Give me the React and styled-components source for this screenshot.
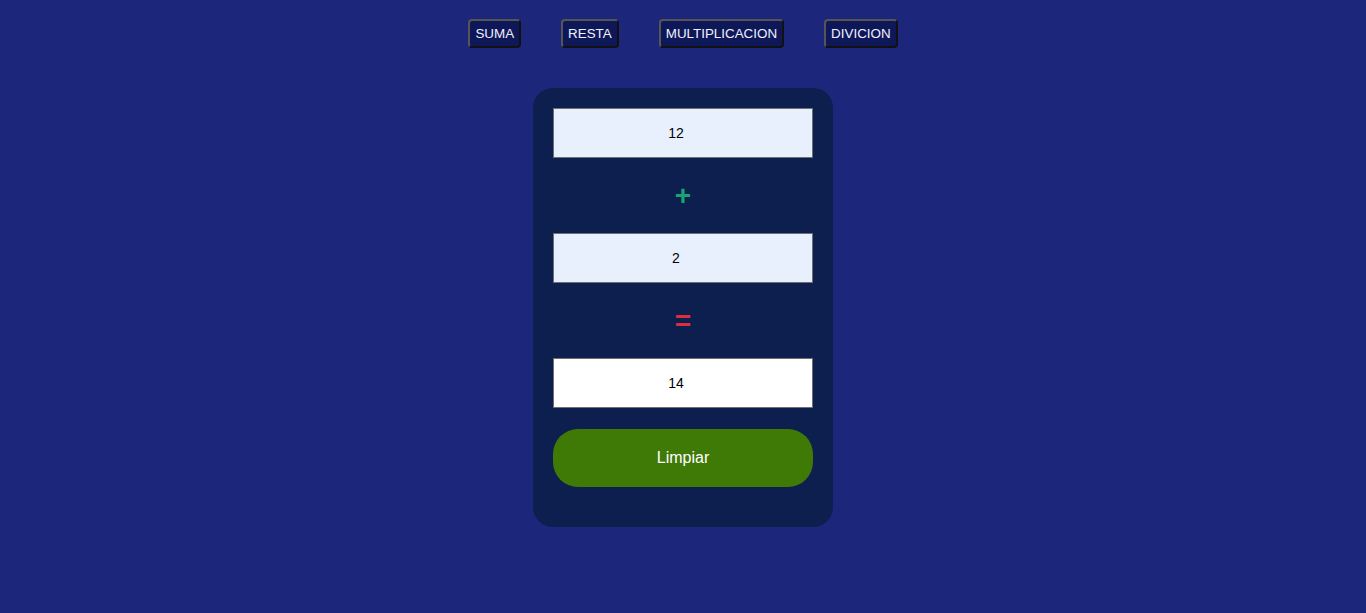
import styled, { createGlobalStyle } from "styled-components";

const Global = createGlobalStyle`
  body {
    margin: 0;
    background: #1c267a;
    font-family: "Liberation Sans", Arial, sans-serif;
  }
`;

const Page = styled.div`
  min-height: 613px;
  display: flex;
  flex-direction: column;
  align-items: center;
  padding-top: 19px;
  box-sizing: border-box;
`;

const Nav = styled.nav`
  display: flex;
  gap: 40px;
`;

const NavButton = styled.button`
  height: 29px;
  padding: 0 5px;
  background: #0e1858;
  color: #f0f0ff;
  font-family: "Liberation Sans", Arial, sans-serif;
  font-size: 13.4px;
  border: 2px solid #555;
  border-right-color: #111;
  border-bottom-color: #111;
  border-radius: 4px;
  cursor: pointer;
`;

const Card = styled.div`
  margin-top: 40px;
  width: 300px;
  box-sizing: border-box;
  padding: 20px 20px 40px;
  background: #0d1f4f;
  border-radius: 20px;
  display: flex;
  flex-direction: column;
`;

const Field = styled.input`
  width: 260px;
  height: 50px;
  box-sizing: border-box;
  border: 1px solid #6f6f6f;
  padding: 0 14px 0 0;
  background: ${(p) => (p.$result ? "#ffffff" : "#e8f0fe")};
  text-align: center;
  font-family: "Liberation Sans", Arial, sans-serif;
  font-size: 14px;
  color: #000;
  outline: none;
`;

const Operator = styled.div`
  height: 75px;
  display: flex;
  align-items: center;
  justify-content: center;
  font-size: 28px;
  font-weight: bold;
  color: ${(p) => p.$color};
  font-family: "Liberation Sans", Arial, sans-serif;
`;

const ClearButton = styled.button`
  margin-top: 21px;
  height: 58px;
  border: none;
  border-radius: 25px;
  background: #3f7a07;
  color: #fff;
  font-family: "Liberation Sans", Arial, sans-serif;
  font-size: 16px;
  cursor: pointer;
`;

export default function App() {
  return (
    <>
      <Global />
      <Page>
        <Nav>
          <NavButton>SUMA</NavButton>
          <NavButton>RESTA</NavButton>
          <NavButton>MULTIPLICACION</NavButton>
          <NavButton>DIVICION</NavButton>
        </Nav>
        <Card>
          <Field defaultValue="12" />
          <Operator $color="#17a673">+</Operator>
          <Field defaultValue="2" />
          <Operator $color="#dc2f3c">=</Operator>
          <Field $result readOnly value="14" />
          <ClearButton>Limpiar</ClearButton>
        </Card>
      </Page>
    </>
  );
}
